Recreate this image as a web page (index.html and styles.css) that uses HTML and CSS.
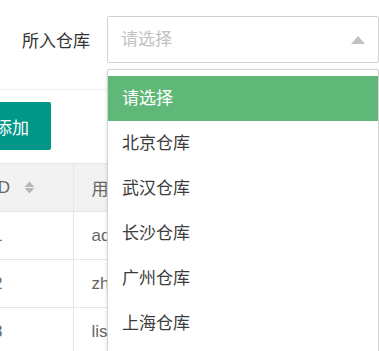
FILE: index.html
```html
<!DOCTYPE html>
<html lang="zh-CN">
<head>
  <meta charset="UTF-8" />
  <meta name="viewport" content="width=device-width, initial-scale=1.0">
  <title>入库管理</title>
  <link rel="stylesheet" href="styles.css">
</head>
<body>
  <div class="form-row">
    <label class="form-label">所入仓库</label>
    <div class="select-wrap">
      <div class="select-input">请选择</div>
      <i class="select-arrow"></i>
      <!-- opened option list -->
      <dl class="select-list">
        <dd class="selected">请选择</dd>
        <dd>北京仓库</dd>
        <dd>武汉仓库</dd>
        <dd>长沙仓库</dd>
        <dd>广州仓库</dd>
        <dd>上海仓库</dd>
      </dl>
    </div>
  </div>
  <div class="divider"></div>
  <div class="toolbar">
    <button class="btn">添加</button>
  </div>
  <table class="data-table">
    <thead>
      <tr>
        <th class="col-id">ID
          <svg class="sort-icon" width="11" height="13" viewBox="0 0 11 13">
            <path d="M0.5 6 L5.5 0.5 L10.5 6 Z" fill="#b8b8b8"/>
            <path d="M0.5 7 L5.5 12.5 L10.5 7 Z" fill="#b8b8b8"/>
          </svg>
        </th>
        <th class="col-name">用户名</th>
      </tr>
    </thead>
    <tbody>
      <tr><td>1</td><td>admin</td></tr>
      <tr><td>2</td><td>zhangsan</td></tr>
      <tr><td>3</td><td>lisi</td></tr>
    </tbody>
  </table>
</body>
</html>
```

FILE: styles.css
```css
/* Reset */
* { margin: 0; padding: 0; box-sizing: border-box; }
body {
  font-family: "Liberation Sans", "Noto Sans CJK SC", sans-serif;
  font-size: 17px;
  color: #333;
  background: #fff;
  width: 379px;
  height: 351px;
  overflow: hidden;
}
/* Form row */
.form-row {
  display: flex;
  align-items: center;
  padding-top: 16px;
}
.form-label {
  width: 109px;
  padding-right: 17px;
  text-align: right;
  color: #333;
}
.select-wrap {
  position: relative;
  width: 272px;
  flex-shrink: 0;
}
.select-input {
  height: 47px;
  line-height: 45px;
  padding-left: 13px;
  border: 1px solid #d2d2d2;
  border-radius: 2px;
  color: #c2c2c2;
}
.select-arrow {
  position: absolute;
  right: 14px;
  top: 20px;
  width: 0;
  height: 0;
  border-left: 7.5px solid transparent;
  border-right: 7.5px solid transparent;
  border-bottom: 8px solid #c2c2c2;
}
.select-list {
  position: absolute;
  top: 53px;
  left: 0;
  width: 100%;
  z-index: 10;
  padding: 6px 0;
  background: #fff;
  border: 1px solid #d2d2d2;
  border-radius: 2px;
  box-shadow: 0 2px 4px rgba(0,0,0,0.12);
}
.select-list dd {
  height: 45px;
  line-height: 45px;
  padding: 0 14px;
  color: #3c3c3c;
  white-space: nowrap;
}
.select-list dd.selected {
  background: #5FB878;
  color: #fff;
}
/* Divider + toolbar */
.divider {
  height: 1px;
  margin-top: 26px;
  background: #f0f0f0;
}
.toolbar {
  margin-top: 12px;
}
.btn {
  height: 48px;
  margin-left: -27px;
  padding: 0 22px;
  border: none;
  border-radius: 2px;
  background: #009688;
  color: #fff;
  font-family: inherit;
  font-size: 17px;
}
/* Table */
.data-table {
  margin-top: 13px;
  margin-left: -25px;
  border-collapse: collapse;
  color: #666;
}
.data-table th,
.data-table td {
  height: 48px;
  padding: 0 18px;
  text-align: left;
  font-weight: normal;
  border-top: 1px solid #e6e6e6;
  border-bottom: 1px solid #e6e6e6;
  white-space: nowrap;
}
.data-table thead th {
  background: #f2f2f2;
}
.data-table .col-id { width: 98px; border-right: 1px solid #e6e6e6; }
.data-table td:first-child { border-right: 1px solid #e6e6e6; }
.data-table .col-name { width: 200px; }
.sort-icon {
  margin-left: 9px;
  vertical-align: -1px;
}
```
